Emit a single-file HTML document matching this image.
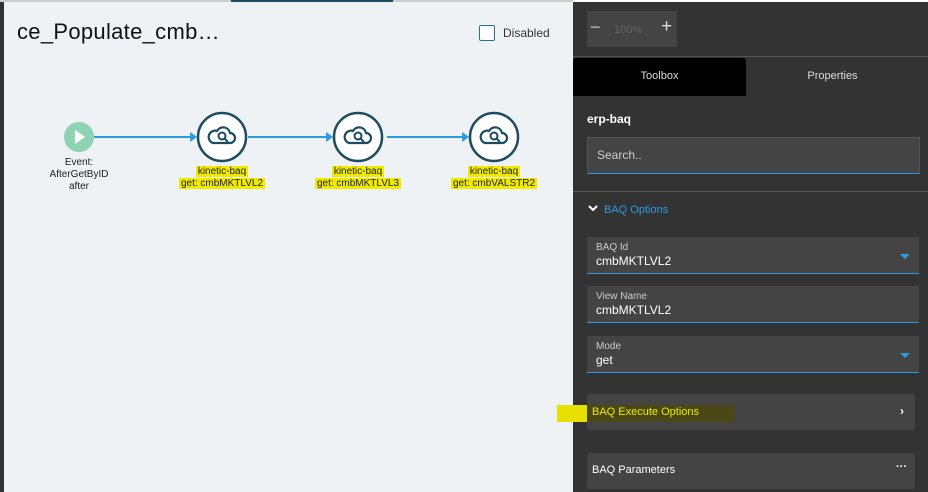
<!DOCTYPE html>
<html><head><meta charset="utf-8"><style>
*{box-sizing:border-box;margin:0;padding:0}
body{width:928px;height:492px;overflow:hidden;font-family:"Liberation Sans",sans-serif;background:#eef2f5;position:relative}
.abs{position:absolute}
.lbl{position:absolute;font-size:10px;color:#222;text-align:center;line-height:12px;white-space:nowrap}
.hl{background:#f0ea00;padding:0 2px}
.panel{left:573px;top:0;width:355px;height:492px;background:#333}
.field{position:absolute;left:587px;width:332px;height:37px;background:#444;border-bottom:1px solid #2a9be0}
.field .t{position:absolute;left:9px;top:5px;font-size:10px;color:#ccc}
.field .v{position:absolute;left:9px;top:17px;font-size:12px;color:#fff}
.caret{position:absolute;right:9px;top:17px;width:0;height:0;border-left:5px solid transparent;border-right:5px solid transparent;border-top:5px solid #2a9be0}
.box{position:absolute;left:587px;width:328px;height:36px;background:#444;border-radius:3px;font-size:11px;color:#fff}
</style></head><body>
<div class="abs" style="left:0;top:0;width:4px;height:492px;background:#333"></div>
<div class="abs" style="left:0;top:0;width:573px;height:2px;background:#ccc"></div>
<div class="abs" style="left:231px;top:0;width:162px;height:2px;background:#1d4b5f"></div>
<div class="abs" style="left:17px;top:19px;font-size:22px;color:#111;letter-spacing:0.3px">ce_Populate_cmb…</div>
<div class="abs" style="left:479px;top:25px;width:16px;height:16px;border:1.5px solid #2a6e9a;border-radius:2px;background:#fff"></div>
<div class="abs" style="left:503px;top:26px;font-size:12px;color:#333">Disabled</div>

<svg class="abs" style="left:0;top:0" width="573" height="492">
<g stroke="#2a9be0" stroke-width="2"><line x1="94" y1="137" x2="190" y2="137"/><line x1="248" y1="137" x2="326" y2="137"/><line x1="387" y1="137" x2="462" y2="137"/></g>
<g fill="#2a9be0"><path d="M190 132 L197 137 L190 142Z"/><path d="M326 132 L333 137 L326 142Z"/><path d="M462 132 L469 137 L462 142Z"/></g>
<circle cx="79" cy="137" r="15" fill="#8fd3b5"/><path d="M75 130 L85 137 L75 144Z" fill="#fff"/>
<g id="n"><circle cx="222" cy="137" r="24" fill="#fff" stroke="#1d4b5f" stroke-width="2.5"/>
<path d="M213 143 h17 a5 5 0 0 0 0-10 a7 7 0 0 0-13-2 a5 5 0 0 0-4 12z" fill="none" stroke="#1d4b5f" stroke-width="2.2"/>
<circle cx="222" cy="136" r="3.5" fill="none" stroke="#1d4b5f" stroke-width="2"/><line x1="224.5" y1="138.5" x2="228" y2="142" stroke="#1d4b5f" stroke-width="2"/></g>
<use href="#n" x="136"/><use href="#n" x="272"/>
</svg>
<div class="lbl" style="left:39px;top:157px;width:80px">Event:<br>AfterGetByID<br>after</div>
<div class="lbl" style="left:172px;top:166px;width:100px"><span class="hl">kinetic-baq</span><br><span class="hl">get: cmbMKTLVL2</span></div>
<div class="lbl" style="left:308px;top:166px;width:100px"><span class="hl">kinetic-baq</span><br><span class="hl">get: cmbMKTLVL3</span></div>
<div class="lbl" style="left:444px;top:166px;width:100px"><span class="hl">kinetic-baq</span><br><span class="hl">get: cmbVALSTR2</span></div>

<div class="abs panel"></div>
<div class="abs" style="left:573px;top:0;width:355px;height:2px;background:#fff"></div>
<div class="abs" style="left:587px;top:11px;width:90px;height:36px;background:#444"></div>
<div class="abs" style="left:590px;top:17px;font-size:18px;color:#bbb">−</div>
<div class="abs" style="left:614px;top:24px;font-size:11px;color:#666">100%</div>
<div class="abs" style="left:661px;top:16px;font-size:19px;color:#ddd">+</div>
<div class="abs" style="left:573px;top:56px;width:355px;height:1px;background:#555"></div>
<div class="abs" style="left:573px;top:58px;width:173px;height:38px;background:#000;border-radius:3px 3px 0 0"></div>
<div class="abs" style="left:573px;top:70px;width:173px;text-align:center;font-size:11px;color:#ddd">Toolbox</div>
<div class="abs" style="left:746px;top:70px;width:173px;text-align:center;font-size:11px;color:#ddd">Properties</div>
<div class="abs" style="left:587px;top:112px;font-size:12px;color:#fff;font-weight:bold">erp-baq</div>
<div class="abs" style="left:587px;top:137px;width:333px;height:37px;background:#444;border:1px solid #555;border-bottom:1px solid #2a9be0"></div>
<div class="abs" style="left:597px;top:148px;font-size:12px;color:#ccc">Search..</div>
<div class="abs" style="left:573px;top:191px;width:355px;height:1px;background:#555"></div>
<svg class="abs" style="left:588px;top:205px" width="10" height="8"><path d="M1 1 L5 5 L9 1" fill="none" stroke="#fff" stroke-width="2"/></svg>
<div class="abs" style="left:604px;top:204px;font-size:11px;color:#2a9be0">BAQ Options</div>
<div class="field" style="top:237px"><div class="t">BAQ Id</div><div class="v">cmbMKTLVL2</div><div class="caret"></div></div>
<div class="field" style="top:286px"><div class="t">View Name</div><div class="v">cmbMKTLVL2</div></div>
<div class="field" style="top:336px"><div class="t">Mode</div><div class="v">get</div><div class="caret"></div></div>
<div class="box" style="top:394px"></div>
<div class="abs" style="left:557px;top:405px;width:177px;height:17px;background:#4a4816"></div>
<div class="abs" style="left:557px;top:405px;width:30px;height:17px;background:#e8e000"></div>
<div class="abs" style="left:592px;top:406px;font-size:11px;color:#f0ea00">BAQ Execute Options</div>
<div class="abs" style="left:900px;top:404px;font-size:12px;color:#fff;font-weight:bold">›</div>
<div class="box" style="top:453px"><span style="position:absolute;left:5px;top:11px">BAQ Parameters</span><span style="position:absolute;right:8px;top:8px;font-weight:bold">···</span></div>
</body></html>
